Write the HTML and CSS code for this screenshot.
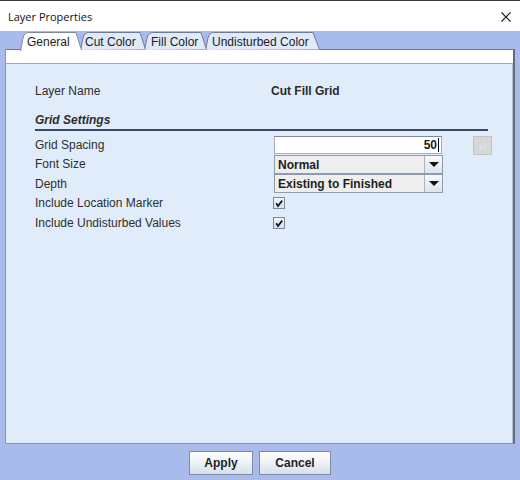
FILE: index.html
```html
<!DOCTYPE html>
<html>
<head>
<meta charset="utf-8">
<title>Layer Properties</title>
<link rel="stylesheet" href="styles.css">
</head>
<body>
<div class="window">
  <div class="titlebar">
    <span class="title">Layer Properties</span>
    <svg class="close" width="10" height="10" viewBox="0 0 10 10"><path d="M0.5 0.5 L9.5 9.5 M9.5 0.5 L0.5 9.5" stroke="#1a1a1a" stroke-width="1.1" fill="none"/></svg>
  </div>
  <div class="dialog">
    <div class="tabs">
      <div class="tab tab-general selected">
        <svg class="tab-shape" width="62" height="19" viewBox="0 0 62 19"><path d="M0.5 19 L3 6 Q4.2 0.8 8.5 0.5 L56 0.5 L61.5 18" fill="#ffffff" stroke="#7f889a"/></svg>
        <span class="tab-label">General</span>
      </div>
      <div class="tab tab-cut">
        <svg class="tab-shape" width="66" height="18" viewBox="0 0 66 18"><path d="M0.5 18 L3 6 Q4.2 0.8 8.5 0.5 L60 0.5 L65.5 17.5" fill="#dfe9f8" stroke="#6f7c98"/></svg>
        <span class="tab-label">Cut Color</span>
      </div>
      <div class="tab tab-fill">
        <svg class="tab-shape" width="63" height="18" viewBox="0 0 63 18"><path d="M0.5 18 L3 6 Q4.2 0.8 8.5 0.5 L57 0.5 L62.5 17.5" fill="#dfe9f8" stroke="#6f7c98"/></svg>
        <span class="tab-label">Fill Color</span>
      </div>
      <div class="tab tab-undist">
        <svg class="tab-shape" width="115" height="18" viewBox="0 0 115 18"><path d="M0.5 18 L3 6 Q4.2 0.8 8.5 0.5 L108 0.5 L114.5 17.5" fill="#dfe9f8" stroke="#6f7c98"/></svg>
        <span class="tab-label">Undisturbed Color</span>
      </div>
    </div>
    <div class="tabbody">
      <div class="panel">
        <div class="namerow">
          <span class="label">Layer Name</span>
          <span class="name-value">Cut Fill Grid</span>
        </div>
        <div class="section">Grid Settings</div>
        <div class="form">
          <span class="label row1">Grid Spacing</span>
          <div class="textfield row1"><span class="tf-text">50</span><span class="caret"></span></div>
          <div class="mini-btn row1">
            <svg width="17" height="17" viewBox="0 0 17 17"><path d="M11 4 L11 11 L6 11 M8 9 L6 11 L8 13" stroke="#e4e4e4" stroke-width="1.2" fill="none"/></svg>
          </div>
          <span class="label row2">Font Size</span>
          <div class="combo row2"><span class="combo-text">Normal</span><span class="combo-arrow"><svg width="10" height="6" viewBox="0 0 10 6"><path d="M0 0 L10 0 L5 5 Z" fill="#111"/></svg></span></div>
          <span class="label row3">Depth</span>
          <div class="combo row3"><span class="combo-text">Existing to Finished</span><span class="combo-arrow"><svg width="10" height="6" viewBox="0 0 10 6"><path d="M0 0 L10 0 L5 5 Z" fill="#111"/></svg></span></div>
          <span class="label row4">Include Location Marker</span>
          <div class="checkbox row4"><svg width="10" height="10" viewBox="0 0 10 10"><path d="M2.2 5.2 L4 8 L8.2 2.6" stroke="#10183a" stroke-width="1.8" fill="none"/></svg></div>
          <span class="label row5">Include Undisturbed Values</span>
          <div class="checkbox row5"><svg width="10" height="10" viewBox="0 0 10 10"><path d="M2.2 5.2 L4 8 L8.2 2.6" stroke="#10183a" stroke-width="1.8" fill="none"/></svg></div>
        </div>
      </div>
    </div>
    <div class="footer">
      <button class="btn btn-apply">Apply</button>
      <button class="btn btn-cancel">Cancel</button>
    </div>
  </div>
</div>
</body>
</html>
```
FILE: styles.css
```css
html, body {
  margin: 0;
  padding: 0;
}
body {
  width: 520px;
  height: 480px;
  overflow: hidden;
  font-family: "Liberation Sans", Arial, sans-serif;
  font-size: 12px;
  color: #333333;
  background: #ffffff;
}
.window {
  display: flex;
  flex-direction: column;
  width: 520px;
  height: 480px;
}
.titlebar {
  height: 31px;
  flex: none;
  display: flex;
  align-items: center;
  justify-content: space-between;
  padding: 0 9px 0 8px;
  background: #ffffff;
  border-top: 1px solid #3a3a3a;
  box-sizing: border-box;
}
.title {
  font-family: "Open Sans", "Liberation Sans", sans-serif;
  font-size: 11px;
  color: #111111;
  padding-top: 1px;
}
.close {
  display: block;
  margin-top: 1px;
}
.dialog {
  flex: 1;
  display: flex;
  flex-direction: column;
  background: #a8bbea;
  padding: 0 5px 0 5px;
}
.tabs {
  height: 19px;
  flex: none;
  display: flex;
  align-items: flex-end;
  padding-left: 15px;
  position: relative;
  z-index: 2;
}
.tab {
  position: relative;
  height: 18px;
  margin-right: -2px;
  display: flex;
  align-items: center;
  padding-left: 6px;
  box-sizing: border-box;
}
.tab-general { width: 62px; padding-left: 7px; z-index: 3; }
.tab-cut { width: 66px; padding-left: 5px; z-index: 2; }
.tab-fill { width: 63px; padding-left: 7px; z-index: 1; }
.tab-undist { width: 115px; padding-left: 7px; }
.tab-shape {
  position: absolute;
  left: 0;
  top: 0;
  display: block;
}
.tab-label {
  position: relative;
  color: #1c1c1c;
  font-size: 12px;
  line-height: 14px;
  padding-top: 2px;
}
.tabbody {
  flex: 1;
  display: flex;
  flex-direction: column;
  margin-top: -1px;
  background: #ffffff;
  border-top: 1px solid #6e788c;
  border-left: 1px solid #8f98a8;
  border-right: 2px solid #646c7c;
  border-bottom: 1px solid #8b93a3;
  padding-top: 13px;
  position: relative;
  z-index: 1;
}
.panel {
  flex: 1;
  background: #e1ecfa;
  border-top: 1px solid #9ea7b6;
  border-right: 1px solid #b9c3d2;
  padding: 18px 0 0 29px;
}
.label {
  color: #2e2e2e;
  font-size: 12px;
  line-height: 14px;
  grid-column: 1;
}
.namerow {
  display: flex;
  align-items: center;
  height: 18px;
}
.namerow .label {
  width: 236px;
}
.name-value {
  font-weight: bold;
  color: #2a2a2a;
}
.section {
  width: 453px;
  height: 18px;
  margin-top: 11px;
  display: flex;
  align-items: center;
  font-weight: bold;
  font-style: italic;
  color: #2c2c2c;
  border-bottom: 2px solid #3d4a66;
}
.form {
  display: grid;
  grid-template-columns: 237px 171px 50px;
  grid-template-rows: 18px 20px 19px 20px 19px;
  align-items: center;
  margin-top: 5px;
}
.row1 { grid-row: 1; }
.row2 { grid-row: 2; }
.row3 { grid-row: 3; }
.row4 { grid-row: 4; }
.row5 { grid-row: 5; }
.textfield {
  grid-column: 2;
  margin-left: 2px;
  width: 168px;
  height: 18px;
  box-sizing: border-box;
  background: #ffffff;
  border: 1px solid #a6aebb;
  border-top-color: #7f8795;
  display: flex;
  align-items: center;
  justify-content: flex-end;
  padding-right: 2px;
}
.tf-text {
  font-weight: bold;
  color: #1a1a1a;
  font-size: 12px;
  line-height: 14px;
}
.caret {
  width: 1px;
  height: 14px;
  background: #000000;
  margin-left: 1px;
}
.mini-btn {
  grid-column: 3;
  margin-left: 30px;
  width: 19px;
  height: 19px;
  box-sizing: border-box;
  background: #d7d7d7;
  border: 1px solid #c2c2c2;
  display: flex;
  align-items: center;
  justify-content: center;
  align-self: start;
}
.mini-btn svg { display: block; }
.combo {
  grid-column: 2;
  margin-left: 2px;
  width: 169px;
  height: 19px;
  box-sizing: border-box;
  background: #eeeeee;
  border: 1px solid #8e9aae;
  display: flex;
  align-items: center;
  align-self: end;
}
.combo-text {
  flex: 1;
  font-weight: bold;
  color: #1e1e1e;
  padding-left: 3px;
  line-height: 14px;
}
.combo-arrow {
  width: 18px;
  height: 17px;
  box-sizing: border-box;
  border-left: 1px solid #a9b3c4;
  background: linear-gradient(#f6f8fb, #dde4ee);
  display: flex;
  align-items: center;
  justify-content: center;
}
.combo-arrow svg { display: block; margin-top: 1px; }
.checkbox {
  grid-column: 2;
  margin-left: 1px;
  width: 12px;
  height: 12px;
  box-sizing: border-box;
  border: 1px solid #7d8aa3;
  background: linear-gradient(#f2f4f8, #d9dfe9);
  display: flex;
  align-items: center;
  justify-content: center;
}
.checkbox svg { display: block; }
.footer {
  height: 36px;
  flex: none;
  display: flex;
  justify-content: center;
  align-items: flex-start;
  gap: 6px;
  padding-top: 7px;
  box-sizing: border-box;
}
.btn {
  height: 24px;
  box-sizing: border-box;
  border: 1px solid #7f8ba0;
  background: linear-gradient(#fdfdfe 0%, #f0f3f8 45%, #d5dfec 100%);
  font-family: "Liberation Sans", Arial, sans-serif;
  font-weight: bold;
  font-size: 12px;
  color: #1f1f1f;
  padding: 0;
  margin: 0;
}
.btn-apply { width: 64px; }
.btn-cancel { width: 72px; }
```
